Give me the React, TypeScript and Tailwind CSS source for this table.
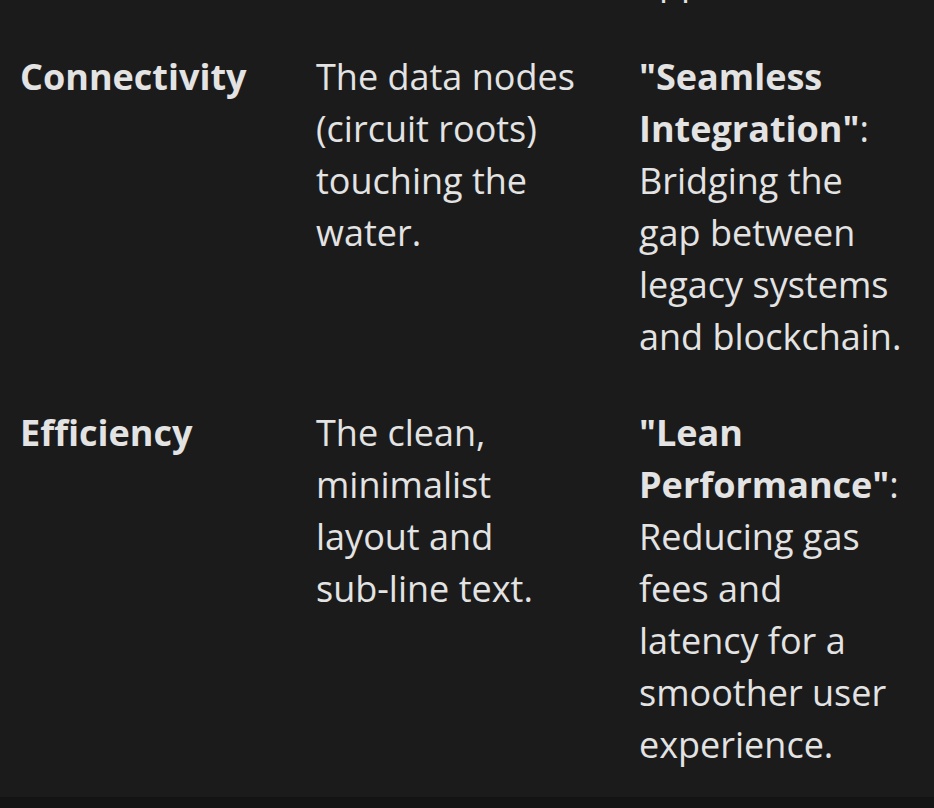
import type { ReactNode } from 'react'

const rows: { label: string; visual: ReactNode; title: string; text: string }[] = [
  {
    label: 'Growth',
    visual: 'The rising sun.',
    title: '"Scalable Future"',
    text: 'Built for new applications.',
  },
  {
    label: 'Connectivity',
    visual: 'The data nodes (circuit roots) touching the water.',
    title: '"Seamless Integration"',
    text: 'Bridging the gap between legacy systems and blockchain.',
  },
  {
    label: 'Efficiency',
    visual: (
      <>
        The clean, minimalist layout and <span className="whitespace-nowrap">sub-line</span> text.
      </>
    ),
    title: '"Lean Performance"',
    text: 'Reducing gas fees and latency for a smoother user experience.',
  },
]

export default function App() {
  return (
    <div className="w-[934px] h-[808px] overflow-hidden bg-[#141414]">
      <div className="h-[797px] overflow-hidden bg-[#1b1b1b] text-[#e3e3e3] font-['Open_Sans',sans-serif] text-[36px] leading-[52px]">
        <div className="-mt-[223px]">
          {rows.map((r) => (
            <div key={r.label} className="grid grid-cols-[296px_323px_266px] pl-5 py-[22px]">
              <div className="font-bold">{r.label}</div>
              <div className="pr-12">{r.visual}</div>
              <div>
                <span className="font-bold">{r.title}</span>: {r.text}
              </div>
            </div>
          ))}
        </div>
      </div>
    </div>
  )
}
